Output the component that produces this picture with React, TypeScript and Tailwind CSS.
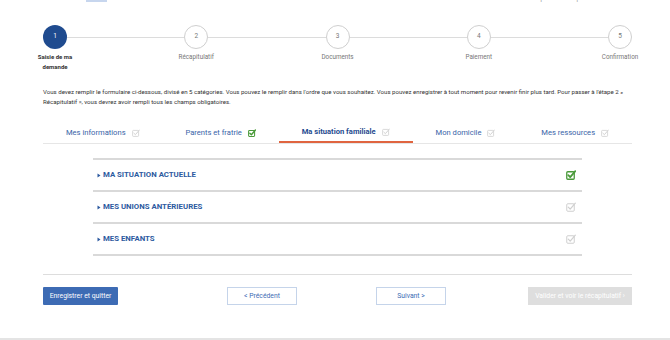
import React from "react";

type CheckProps = { done?: boolean; size?: number };

function CheckBox({ done = false, size = 8 }: CheckProps) {
  const stroke = done ? "#4a9a3a" : "#cfcfcf";
  return (
    <svg width={size} height={size} viewBox="0 0 10 10" className="shrink-0">
      <rect x="0.75" y="1.75" width="7.5" height="7.5" rx="1" fill="none" stroke={stroke} strokeWidth={done ? 1.3 : 1} />
      <path d="M2.3 5.2 L4.2 7.1 L9.3 1.2" fill="none" stroke={stroke} strokeWidth={done ? 1.8 : 1.2} strokeLinecap="round" strokeLinejoin="round" />
    </svg>
  );
}

const steps = ["Saisie de ma demande", "Récapitulatif", "Documents", "Paiement", "Confirmation"];

const tabs = [
  { label: "Mes informations", done: false },
  { label: "Parents et fratrie", done: true },
  { label: "Ma situation familiale", done: false, active: true },
  { label: "Mon domicile", done: false },
  { label: "Mes ressources", done: false },
];

const sections = [
  { label: "MA SITUATION ACTUELLE", done: true },
  { label: "MES UNIONS ANTÉRIEURES", done: false },
  { label: "MES ENFANTS", done: false },
];

export default function App() {
  return (
    <div className="w-[670px] h-[340px] overflow-hidden bg-white font-['Roboto',sans-serif] flex flex-col">
      {/* breadcrumb, mostly scrolled off */}
      <div className="-mt-[7px] h-[10px] pl-[44px] pr-[38px] flex justify-between text-[6.5px] leading-[10px] text-[#9a9a9a]">
        <span>
          Vous êtes ici : <span className="bg-[#c7d6ee] text-[#6b8cc4]">Accueil</span> &gt; Saisie de ma demande
        </span>
        <span>Connecté en tant que Marie Dupont · Déconnexion</span>
      </div>

      <div className="flex flex-col pl-[43px] pr-[38px]">
        {/* stepper */}
        <div className="mt-[22px] flex items-center">
          {steps.map((s, i) => (
            <React.Fragment key={s}>
              <div
                className={
                  i === 0
                    ? "w-6 h-6 rounded-full bg-[#1f4b8f] text-white flex items-center justify-center text-[6.5px]"
                    : "w-6 h-6 rounded-full border border-[#cfcfcf] bg-white text-[#777] flex items-center justify-center text-[6.5px]"
                }
              >
                {i + 1}
              </div>
              {i < steps.length - 1 && <div className="flex-1 h-px bg-[#dcdcdc]" />}
            </React.Fragment>
          ))}
        </div>
        <div className="mt-[3px] flex justify-between">
          {steps.map((s, i) => (
            <div key={s} className="w-6 flex justify-center">
              <div
                className={
                  i === 0
                    ? "whitespace-nowrap text-center text-[6px] leading-[10px] font-bold text-[#333]"
                    : "whitespace-nowrap text-center text-[6.3px] leading-[10px] text-[#777]"
                }
              >
                {i === 0 ? (
                  <>
                    Saisie de ma
                    <br />
                    demande
                  </>
                ) : (
                  s
                )}
              </div>
            </div>
          ))}
        </div>

        {/* intro */}
        <p className="mt-[15px] text-[6.1px] leading-[10px] text-[#333]">
          Vous devez remplir le formulaire ci-dessous, divisé en 5 catégories. Vous pouvez le remplir dans l'ordre que vous souhaitez. Vous pouvez enregistrer à tout moment pour revenir finir plus tard. Pour passer à l'étape 2 « Récapitulatif », vous devrez avoir rempli tous les champs obligatoires.
        </p>

        {/* tabs */}
        <div className="mt-[15px] flex border-b border-[#e6e6e6]">
          {tabs.map((t) => (
            <div
              key={t.label}
              className={
                t.active
                  ? "flex-auto h-[21px] flex items-center justify-center gap-[6px] border-b-2 border-[#e0643f] -mb-px"
                  : "flex-auto h-[21px] flex items-center justify-center gap-[6px]"
              }
            >
              <span
                className={
                  t.active
                    ? "text-[7.6px] font-bold text-[#1f4b8f] whitespace-nowrap"
                    : "text-[7.6px] text-[#3863a8] whitespace-nowrap"
                }
              >
                {t.label}
              </span>
              <CheckBox done={t.done} size={8} />
            </div>
          ))}
        </div>

        {/* accordion */}
        <div className="mt-[14px] mx-[50px] border-t-2 border-[#d9d9d9]">
          {sections.map((s) => (
            <div key={s.label} className="h-[32px] flex items-center justify-between border-b-2 border-[#d9d9d9] pl-[4px] pr-[6px]">
              <div className="flex items-center gap-[2px]">
                <svg width="4" height="5" viewBox="0 0 4 5">
                  <path d="M0.5 0.5 L3.5 2.5 L0.5 4.5 Z" fill="#2d5aa0" />
                </svg>
                <span className="text-[7.8px] font-bold text-[#2d5aa0]">{s.label}</span>
              </div>
              <CheckBox done={s.done} size={10} />
            </div>
          ))}
        </div>

        {/* footer */}
        <div className="mt-[18px] border-t border-[#dddddd]" />
        <div className="mt-[12px] flex items-center">
          <div className="w-[75px] h-[18px] bg-[#3d6bb4] text-white text-[6.8px] flex items-center justify-center rounded-[1px]">
            Enregistrer et quitter
          </div>
          <div className="ml-[109px] w-[70px] h-[18px] border border-[#c5d4ea] text-[#3d6bb4] text-[6.8px] flex items-center justify-center">
            &lt; Précédent
          </div>
          <div className="ml-[79px] w-[70px] h-[18px] border border-[#c5d4ea] text-[#3d6bb4] text-[6.8px] flex items-center justify-center">
            Suivant &gt;
          </div>
          <div className="ml-auto w-[104px] h-[18px] bg-[#dedede] text-white text-[6.8px] flex items-center justify-center">
            Valider et voir le récapitulatif ›
          </div>
        </div>
      </div>
      <div className="mt-auto h-[2px] bg-[#e4e4e4]" />
    </div>
  );
}
